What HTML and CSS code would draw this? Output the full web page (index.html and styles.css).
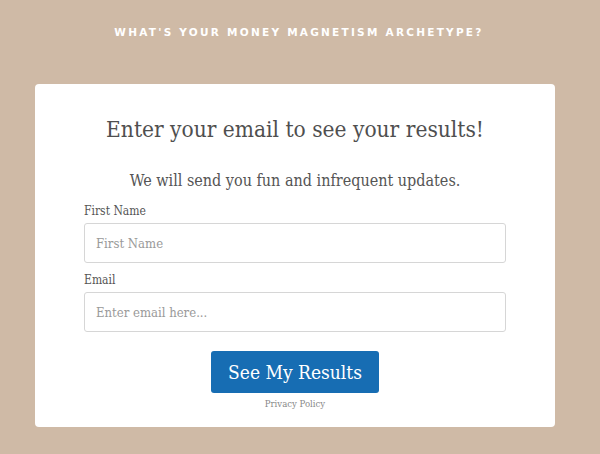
FILE: index.html
```html
<!DOCTYPE html>
<html lang="en">
<head>
<meta charset="utf-8">
<title>Money Magnetism Archetype</title>
<link rel="stylesheet" href="styles.css">
</head>
<body>
<div class="page">
  <h2 class="kicker">WHAT'S YOUR MONEY MAGNETISM ARCHETYPE?</h2>
  <div class="card">
    <h1 class="title">Enter your email to see your results!</h1>
    <p class="sub">We will send you fun and infrequent updates.</p>
    <form class="form">
      <label class="label" for="fn">First Name</label>
      <input class="input" id="fn" type="text" placeholder="First Name">
      <label class="label" for="em">Email</label>
      <input class="input" id="em" type="email" placeholder="Enter email here...">
      <div class="actions">
        <button class="btn" type="button">See My Results</button>
        <a class="privacy" href="#">Privacy Policy</a>
      </div>
    </form>
  </div>
</div>
</body>
</html>
```
FILE: styles.css
```css
html, body {
  margin: 0;
  padding: 0;
  background: #cfbaa6;
}
.page {
  width: 600px;
  height: 454px;
  display: flex;
  flex-direction: column;
  align-items: center;
  font-family: "DejaVu Serif Condensed", "DejaVu Serif", serif;
  overflow: hidden;
}
.kicker {
  margin: 26px 0 0 0;
  font-family: "DejaVu Sans", sans-serif;
  font-weight: bold;
  font-size: 10.5px;
  letter-spacing: 2.25px;
  color: #ffffff;
  line-height: 13px;
  padding-right: 2px;
}
.card {
  margin-top: 45px;
  margin-left: -10px;
  width: 520px;
  box-sizing: border-box;
  background: #ffffff;
  border-radius: 4px;
  padding: 30px 49px 17px 49px;
  display: flex;
  flex-direction: column;
}
.title {
  margin: 0;
  text-align: center;
  font-weight: normal;
  font-size: 22.5px;
  line-height: 30px;
  color: #4f4f4f;
}
.sub {
  margin: 27px 0 0 0;
  text-align: center;
  font-size: 16px;
  line-height: 20px;
  color: #555555;
}
.form {
  display: flex;
  flex-direction: column;
  margin-top: 12px;
}
.label {
  font-size: 12px;
  color: #555555;
  line-height: 16px;
  margin-bottom: 4px;
}
.input {
  height: 40px;
  box-sizing: border-box;
  border: 1px solid #d6d6d6;
  border-radius: 3px;
  padding: 0 11px;
  font-family: inherit;
  font-size: 13px;
  color: #333;
  margin: 0 0 9px 0;
  outline: none;
}
.input::placeholder {
  color: #9a9a9a;
}
.actions {
  display: flex;
  flex-direction: column;
  align-items: center;
  margin-top: 10px;
}
.btn {
  width: 168px;
  height: 42px;
  background: #176db3;
  border: none;
  border-radius: 3px;
  color: #ffffff;
  font-family: inherit;
  font-weight: normal;
  font-size: 19px;
  cursor: pointer;
}
.privacy {
  margin-top: 4px;
  font-size: 9.5px;
  line-height: 13px;
  color: #888888;
  text-decoration: none;
}
```
